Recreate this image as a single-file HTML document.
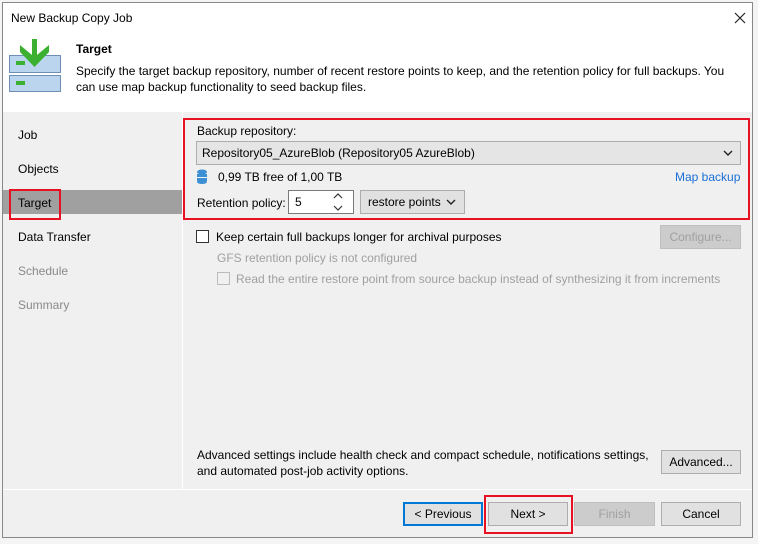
<!DOCTYPE html><html><head><style>
body{margin:0;width:758px;height:544px;background:#fff;position:relative;overflow:hidden;font-family:"Liberation Sans",sans-serif;font-size:12px;color:#000}
.a{position:absolute}
.btn{position:absolute;background:#e1e1e1;border:1px solid #adadad;text-align:center;line-height:22px;box-sizing:border-box;height:24px}
.dis{color:#a0a0a0;background:#ccc;border-color:#bfbfbf}
</style></head><body>
<div class="a" style="left:0;top:0;width:758px;height:544px;background:#f4f4f4"></div>
<div class="a" style="left:2px;top:2px;width:751px;height:536px;border:1px solid #888;background:#fff;box-sizing:border-box"></div>
<div class="a" style="left:11px;top:11px;font-size:12px">New Backup Copy Job</div>
<svg class="a" style="left:734px;top:12px" width="12" height="12"><path d="M1 1 L11 11 M11 1 L1 11" stroke="#222" stroke-width="1.2"/></svg>
<svg class="a" style="left:9px;top:39px" width="53" height="54">
<rect x="0.5" y="16.5" width="51" height="17" fill="#bcd5ee" stroke="#6d8fb5"/>
<rect x="0.5" y="36.5" width="51" height="16" fill="#bcd5ee" stroke="#6d8fb5"/>
<rect x="7" y="22" width="9" height="4" fill="#3cb030"/><rect x="7" y="42" width="9" height="4" fill="#3cb030"/>
<polygon points="23,0 28,0 28,16 40,6 40,13 25.5,28 11,13 11,6 23,16" fill="#3cb030"/>
</svg>
<div class="a" style="left:76px;top:42px;font-weight:bold">Target</div>
<div class="a" style="left:76px;top:63px;width:670px;line-height:16px">Specify the target backup repository, number of recent restore points to keep, and the retention policy for full backups. You can use map backup functionality to seed backup files.</div>
<div class="a" style="left:3px;top:112px;width:749px;height:377px;background:#f0f0f0"></div>
<div class="a" style="left:182px;top:112px;width:1px;height:377px;background:#fff"></div>
<div class="a" style="left:3px;top:489px;width:749px;height:1px;background:#fff"></div>
<div class="a" style="left:3px;top:490px;width:749px;height:47px;background:#f0f0f0"></div>
<div class="a" style="left:3px;top:190px;width:179px;height:24px;background:#a0a0a0"></div>
<div class="a" style="left:18px;top:128px">Job</div>
<div class="a" style="left:18px;top:162px">Objects</div>
<div class="a" style="left:18px;top:196px">Target</div>
<div class="a" style="left:18px;top:230px">Data Transfer</div>
<div class="a" style="left:18px;top:264px;color:#8a8a8a">Schedule</div>
<div class="a" style="left:18px;top:298px;color:#8a8a8a">Summary</div>
<div class="a" style="left:9px;top:189px;width:52px;height:31px;border:2px solid #e81123;box-sizing:border-box"></div>
<div class="a" style="left:183px;top:118px;width:567px;height:102px;border:2px solid #e81123;box-sizing:border-box"></div>
<div class="a" style="left:197px;top:124px">Backup repository:</div>
<div class="a" style="left:196px;top:141px;width:545px;height:24px;background:#e5e5e5;border:1px solid #adadad;box-sizing:border-box"></div>
<div class="a" style="left:202px;top:146px">Repository05_AzureBlob (Repository05 AzureBlob)</div>
<svg class="a" style="left:723px;top:149px" width="10" height="8"><path d="M1 2 L5 6 L9 2" fill="none" stroke="#222" stroke-width="1.4"/></svg>
<svg class="a" style="left:196px;top:169px" width="12" height="16"><ellipse cx="6" cy="3" rx="5" ry="2.5" fill="#3d8fd3"/><rect x="1" y="5" width="10" height="3" fill="#3d8fd3"/><rect x="1" y="9" width="10" height="3" fill="#3d8fd3"/><ellipse cx="6" cy="13" rx="5" ry="2" fill="#3d8fd3"/></svg>
<div class="a" style="left:218px;top:170px">0,99 TB free of 1,00 TB</div>
<div class="a" style="left:675px;top:170px;color:#1a6fd6">Map backup</div>
<div class="a" style="left:197px;top:196px">Retention policy:</div>
<div class="a" style="left:288px;top:190px;width:66px;height:24px;background:#fff;border:1px solid #7a7a7a;box-sizing:border-box"></div>
<div class="a" style="left:295px;top:195px">5</div>
<svg class="a" style="left:332px;top:191px" width="12" height="22"><path d="M2 7 L6 3 L10 7 M2 15 L6 19 L10 15" fill="none" stroke="#333" stroke-width="1.2"/></svg>
<div class="btn" style="left:360px;top:190px;width:105px;height:24px;text-align:left;padding-left:7px;background:#e1e1e1">restore points</div>
<svg class="a" style="left:446px;top:198px" width="10" height="8"><path d="M1 2 L5 6 L9 2" fill="none" stroke="#222" stroke-width="1.4"/></svg>
<div class="a" style="left:196px;top:230px;width:13px;height:13px;background:#fff;border:1px solid #333;box-sizing:border-box"></div>
<div class="a" style="left:216px;top:230px">Keep certain full backups longer for archival purposes</div>
<div class="btn dis" style="left:660px;top:225px;width:81px">Configure...</div>
<div class="a" style="left:217px;top:251px;color:#a0a0a0">GFS retention policy is not configured</div>
<div class="a" style="left:217px;top:272px;width:13px;height:13px;border:1px solid #bcbcbc;box-sizing:border-box"></div>
<div class="a" style="left:236px;top:272px;color:#a0a0a0">Read the entire restore point from source backup instead of synthesizing it from increments</div>
<div class="a" style="left:197px;top:447px;line-height:16px;width:460px">Advanced settings include health check and compact schedule, notifications settings, and automated post-job activity options.</div>
<div class="btn" style="left:661px;top:450px;width:80px">Advanced...</div>
<div class="btn" style="left:403px;top:502px;width:80px;border:2px solid #0078d7;line-height:20px">&lt; Previous</div>
<div class="btn" style="left:488px;top:502px;width:80px">Next &gt;</div>
<div class="a" style="left:484px;top:495px;width:89px;height:39px;border:2px solid #e81123;box-sizing:border-box"></div>
<div class="btn dis" style="left:574px;top:502px;width:81px">Finish</div>
<div class="btn" style="left:661px;top:502px;width:80px">Cancel</div>
</body></html>
